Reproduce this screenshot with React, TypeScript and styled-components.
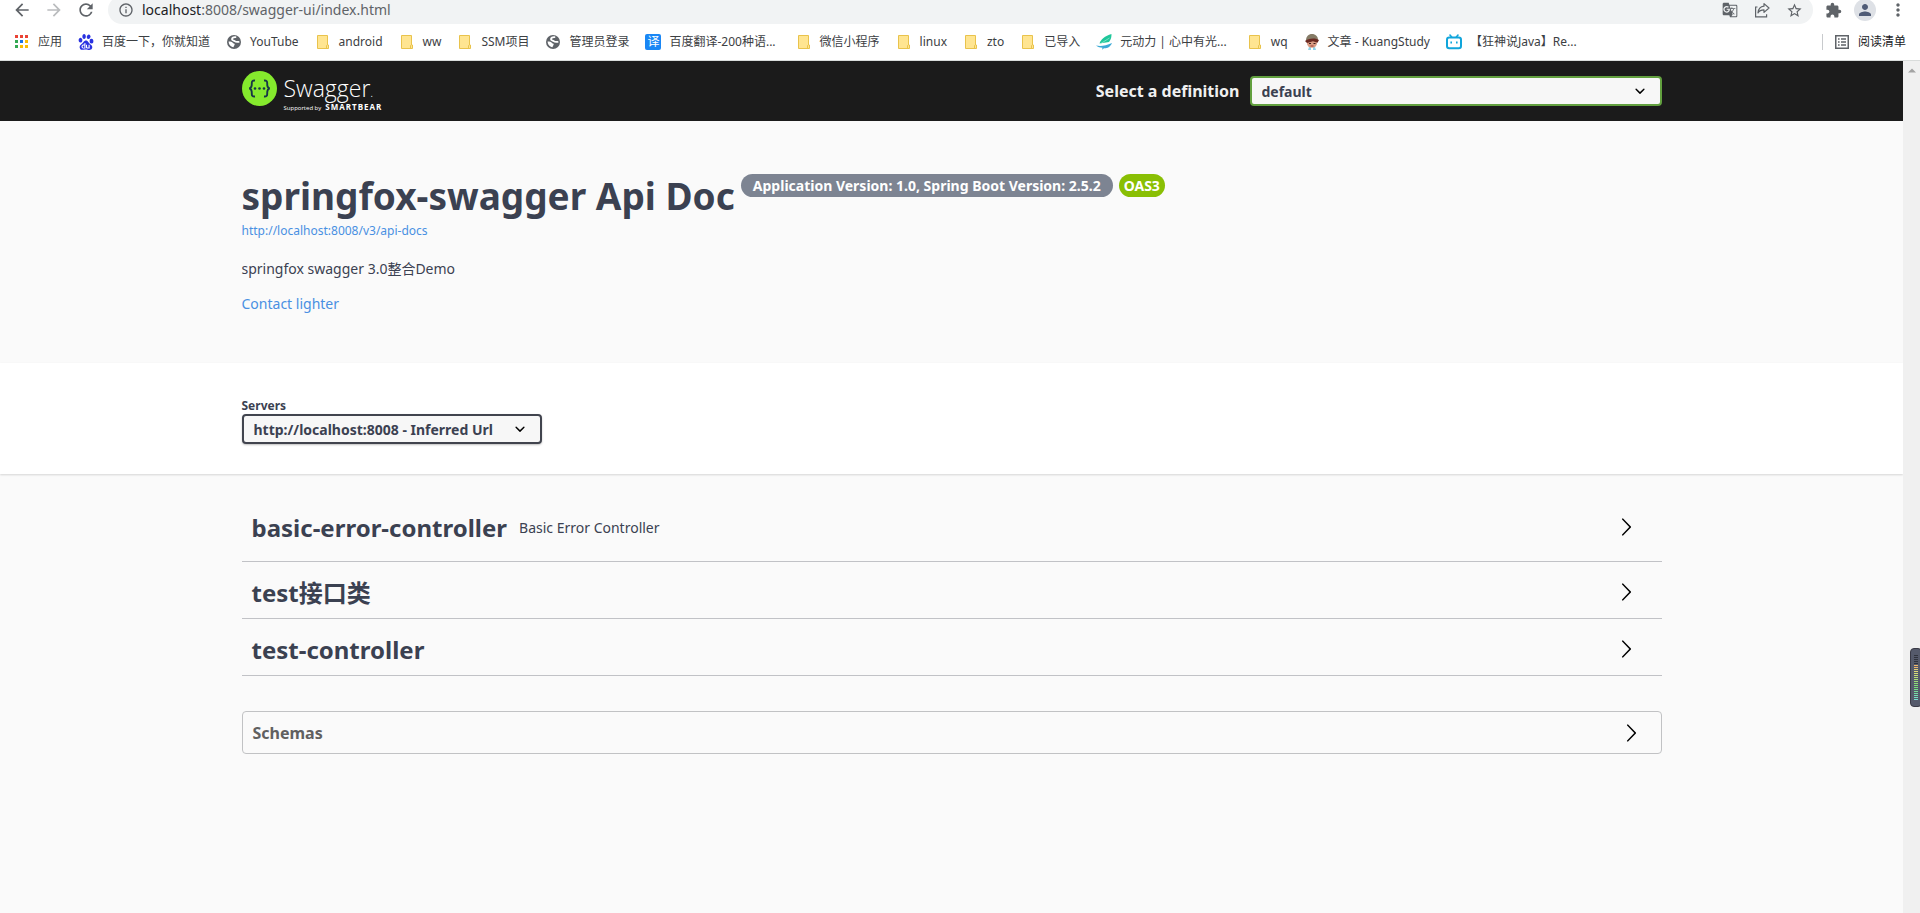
import React from "react";
import styled, { createGlobalStyle } from "styled-components";
import {
  MdArrowBack,
  MdArrowForward,
  MdRefresh,
  MdInfoOutline,
  MdGTranslate,
  MdStarBorder,
  MdExtension,
  MdPerson,
  MdMoreVert,
} from "react-icons/md";
import { SiBaidu } from "react-icons/si";

const GlobalStyle = createGlobalStyle`
  *, *::before, *::after { box-sizing: border-box; }
  body {
    margin: 0;
    background: #fafafa;
    color: #3b4151;
    font-family: "Noto Sans", "Noto Sans CJK SC", sans-serif;
    font-size: 14px;
  }
  button { font-family: inherit; border: 0; padding: 0; background: none; cursor: pointer; }
  h1, h2, p { margin: 0; }
  svg { display: block; }
`;

/* ---------- browser chrome ---------- */

const Shell = styled.div`
  display: flex;
  flex-direction: column;
  min-height: 100vh;
`;

const Chrome = styled.header`
  background: #fff;
  border-bottom: 1px solid #d9dcdb;
  overflow: hidden;
`;

const Toolbar = styled.div`
  display: flex;
  align-items: center;
  height: 28px;
  margin-top: -4px;
  padding: 0 12px;
`;

const NavButtons = styled.nav`
  display: flex;
  gap: 12px;
  margin-right: 12px;
`;

const ToolButton = styled.button<{ $faded?: boolean }>`
  display: flex;
  color: ${(p) => (p.$faded ? "#babcbe" : "#5f6368")};
`;

const AddressBar = styled.div`
  flex: 1;
  display: flex;
  align-items: center;
  height: 28px;
  padding: 0 10px;
  border-radius: 14px;
  background: #f1f3f4;
  color: #5f6368;
`;

const AddressText = styled.div`
  flex: 1;
  margin-left: 8px;
  font-size: 14px;
  line-height: 20px;
  strong { font-weight: 400; color: #202124; }
`;

const AddressActions = styled.div`
  display: flex;
  gap: 16px;
`;

const ToolbarEnd = styled.div`
  display: flex;
  align-items: center;
  gap: 12px;
  margin-left: 12px;
`;

const Avatar = styled.span`
  display: flex;
  align-items: center;
  justify-content: center;
  width: 22px;
  height: 22px;
  border-radius: 50%;
  background: #dee1e6;
  color: #4f5b76;
`;

const BookmarkBar = styled.nav`
  display: flex;
  align-items: center;
  height: 36px;
  padding: 0 14px;
`;

const BookmarkList = styled.div`
  display: flex;
  flex: 1;
  gap: 16px;
`;

const Bookmark = styled.a<{ $cut?: boolean }>`
  display: flex;
  align-items: center;
  gap: 8px;
  padding-right: ${(p) => (p.$cut ? "4px" : "0")};
  color: #3c4043;
  font-size: 12px;
  line-height: 18px;
  white-space: nowrap;
  text-decoration: none;
`;

const TranslateSiteIcon = styled.span`
  width: 16px;
  height: 16px;
  border-radius: 2px;
  background: #1a87f5;
  color: #fff;
  font-size: 12px;
  line-height: 16px;
  text-align: center;
`;

const ReadingList = styled.button`
  display: flex;
  align-items: center;
  gap: 8px;
  height: 16px;
  padding-left: 11px;
  border-left: 1px solid #c8cacd;
  color: #202124;
  font-size: 12px;
  line-height: 18px;
`;

/* ---------- page ---------- */

const Viewport = styled.div`
  flex: 1;
  display: flex;
`;

const Page = styled.main`
  flex: 1;
  min-width: 0;
`;

const ScrollTrack = styled.div`
  display: flex;
  justify-content: center;
  width: 17px;
  padding-top: 7px;
  background: #f0f0f0;
`;

const Wrapper = styled.div`
  max-width: 1460px;
  margin: 0 auto;
  padding: 0 20px;
`;

const Topbar = styled.div`
  background: #1b1b1b;
`;

const TopbarRow = styled(Wrapper)`
  display: flex;
  align-items: center;
  justify-content: space-between;
  height: 60px;
`;

const Logo = styled.a`
  display: flex;
  gap: 7px;
  color: #fff;
  font-family: "Open Sans", sans-serif;
  text-decoration: none;
`;

const LogoName = styled.span`
  display: block;
  margin-top: 2px;
  font-size: 23px;
  font-weight: 300;
  line-height: 30px;
  small { font-size: 12px; line-height: 1; }
`;

const LogoBacker = styled.span`
  display: flex;
  align-items: baseline;
  gap: 4px;
  font-size: 6px;
  line-height: 8px;
  b { font-size: 8px; letter-spacing: 1px; }
`;

const DefinitionLabel = styled.label`
  display: flex;
  align-items: center;
  gap: 10px;
  color: #f0f0f0;
  font-size: 16px;
  font-weight: 700;
`;

const SelectFrame = styled.span<{ $wide?: boolean }>`
  position: relative;
  display: inline-block;
  width: ${(p) => (p.$wide ? "412px" : "300px")};
  svg {
    position: absolute;
    top: 5px;
    right: 12px;
    pointer-events: none;
    fill: #000;
  }
`;

const Select = styled.select<{ $accent?: boolean }>`
  display: block;
  width: 100%;
  height: 30px;
  padding: 0 40px 0 10px;
  appearance: none;
  border: 2px solid ${(p) => (p.$accent ? "#62a03f" : "#41444e")};
  border-radius: 4px;
  background: #f7f7f7;
  box-shadow: ${(p) => (p.$accent ? "none" : "0 1px 2px rgba(0, 0, 0, 0.25)")};
  color: #3b4151;
  font-family: inherit;
  font-size: 14px;
  font-weight: 700;
`;

const Info = styled(Wrapper)`
  padding-top: 50px;
  padding-bottom: 49px;
`;

const Title = styled.h1`
  display: flex;
  align-items: flex-start;
  gap: 6px;
  font-size: 37px;
  line-height: 50px;
`;

const Badge = styled.span<{ $green?: boolean }>`
  margin-top: 3px;
  padding: 0 ${(p) => (p.$green ? "5px" : "12px")};
  border-radius: 12px;
  background: ${(p) => (p.$green ? "#89bf04" : "#7d8492")};
  color: #fff;
  font-size: 14px;
  line-height: 23px;
`;

const TextLink = styled.a<{ $small?: boolean }>`
  display: block;
  width: fit-content;
  color: #4990e2;
  font-size: ${(p) => (p.$small ? "12px" : "14px")};
  line-height: 20px;
  text-decoration: none;
`;

const Description = styled.p`
  margin: 18px 0 15px;
  line-height: 20px;
`;

const Servers = styled.section`
  padding: 34px 0 30px;
  background: #fff;
  box-shadow: 0 1px 2px rgba(0, 0, 0, 0.15);
`;

const ServersLabel = styled.label`
  display: block;
  font-size: 12px;
  font-weight: 700;
  line-height: 17px;
`;

const Tags = styled(Wrapper)`
  padding-top: 20px;
`;

const TagRow = styled.button<{ $tall?: boolean }>`
  display: flex;
  align-items: center;
  width: 100%;
  height: ${(p) => (p.$tall ? "68px" : "57px")};
  padding: ${(p) => (p.$tall ? "0" : "5px")} 26px 0 10px;
  border-bottom: 1px solid #c1c2c6;
  color: #3b4151;
  text-align: left;
  svg { margin-bottom: 2px; }
`;

const TagName = styled.h2`
  font-size: 24px;
  line-height: 36px;
`;

const TagNote = styled.span`
  flex: 1;
  padding: 0 12px;
  font-size: 14px;
`;

const Schemas = styled.button`
  display: flex;
  align-items: center;
  justify-content: space-between;
  width: 100%;
  height: 43px;
  margin: 35px 0;
  padding: 0 20px 0 10px;
  border: 1px solid #c1c2c4;
  border-radius: 4px;
  color: #606060;
  font-size: 16px;
  font-weight: 700;
`;

const MeterWidget = styled.aside`
  position: fixed;
  top: 71%;
  right: -2px;
  width: 12px;
  height: 59px;
  padding: 6px 0 0 3px;
  border: 1px solid #3a3a46;
  border-radius: 4px;
  background: #555a6b;
`;

/* ---------- drawings ---------- */

const AppsIcon = () => (
  <svg width="16" height="16" viewBox="0 0 16 16" aria-hidden>
    {["#ea4335", "#ea4335", "#ea4335", "#34a853", "#1a73e8", "#fbbc04", "#34a853", "#fbbc04", "#fbbc04"].map((c, i) => (
      <rect key={i} x={1 + (i % 3) * 5} y={1 + Math.floor(i / 3) * 5} width="3" height="3" fill={c} />
    ))}
  </svg>
);

const FolderIcon = () => (
  <svg width="16" height="16" viewBox="0 0 16 16" aria-hidden>
    <path d="M2.5 1.500h10v9.500h1v3.500h-11z" fill="#ffe591" stroke="#e9c34c" />
    <path d="M11.500 14v-2.500l1-1" fill="none" stroke="#e9c34c" />
  </svg>
);

const GlobeIcon = () => (
  <svg width="16" height="16" viewBox="0 0 16 16" aria-hidden>
    <circle cx="8" cy="8" r="7" fill="#5f6368" />
    <path
      d="M9.500 3.200C7.500 3 6 3.900 6 5.200c0 1.500 2.200 1.200 3 2.100.7.900 1.900.6 3.600.6"
      fill="none"
      stroke="#fff"
      strokeWidth="1.800"
      strokeLinecap="round"
    />
    <path d="M2.600 7.600c2 0 3.600.2 4.400 1.300.5.700 2 .4 1.700 1.700L7.400 13.200C4.700 12.900 2.600 10.600 2.600 7.600z" fill="#fff" />
  </svg>
);

const WingIcon = () => (
  <svg width="16" height="16" viewBox="0 0 16 16" aria-hidden>
    <path d="M15.500 0C9 2 4.500 5.500 3.500 9.600L13 8c2-2.500 2.500-5 2.500-8z" fill="#1fc79b" />
    <path d="M4 10 13.500 4" stroke="#b9f0de" strokeWidth="0.6" />
    <path d="M0 11.500c5 1.200 10 0 16-2.500-2 4.500-5 5.500-8 5.300l-2 1.500.5-2C4 13.600 2 13 0 11.500z" fill="#3ba9d6" />
  </svg>
);

const KuangIcon = () => (
  <svg width="16" height="16" viewBox="0 0 16 16" aria-hidden>
    <path d="M5 13h6l1 3H4z" fill="#8fd3ea" />
    <path d="M7 13h2v3H7z" fill="#fff" />
    <ellipse cx="8" cy="9.500" rx="5" ry="4.200" fill="#d99b83" />
    <path d="M2 6.500C2 2.500 4.500 0 8 0s6 2.500 6 6z" fill="#857b66" />
    <path d="M1 7c3-3 11-3.500 14-1l-1.500 2.800L9 7.200 3 9z" fill="#6b2a22" />
    <path d="M5 9.500h2M9.500 9.500h2" stroke="#3c1f1c" />
    <path d="M6.500 12h3" stroke="#9c3f36" />
  </svg>
);

const TvIcon = () => (
  <svg width="16" height="16" viewBox="0 0 16 16" aria-hidden>
    <path d="M4 1l2 2.500M12 1l-2 2.500" stroke="#10a5db" strokeWidth="1.600" strokeLinecap="round" />
    <rect x="1" y="3.600" width="14" height="10.600" rx="2.200" fill="#fff" stroke="#10a5db" strokeWidth="2" />
    <path d="M5.200 7.500v2M10.800 7.500v2" stroke="#10a5db" strokeWidth="1.600" />
  </svg>
);

const ReadingListIcon = () => (
  <svg width="16" height="16" viewBox="0 0 16 16" fill="none" stroke="#5f6368" aria-hidden>
    <rect x="1.750" y="1.750" width="12.500" height="12.500" strokeWidth="1.500" />
    <path d="M4 5h1.600M4 8h1.600M4 11h1.600M7 5h5M7 8h5M7 11h5" strokeWidth="1.500" />
  </svg>
);

const ShareIcon = () => (
  <svg width="16" height="16" viewBox="0 0 16 16" fill="none" stroke="#5f6368" strokeWidth="1.200" aria-hidden>
    <path d="M3.500 5H1.600v9.900h11v-2.600" />
    <path d="M10 1.600 15 6l-5 4.400V7.900c-3 0-4.800 1-6 3C4.300 7.300 6.500 4.600 10 4.200z" strokeLinejoin="round" />
  </svg>
);

const ScrollUpIcon = () => (
  <svg width="8" height="5" viewBox="0 0 8 5" aria-hidden>
    <path d="M0 4.500 4 0.500l4 4z" fill="#a3a3a3" />
  </svg>
);

const SwaggerMark = () => (
  <svg width="35" height="35" viewBox="0 0 35 35" aria-hidden>
    <circle cx="17.500" cy="17.500" r="17.500" fill="#85ea2d" />
    <g fill="none" stroke="#173647" strokeWidth="1.900">
      <path d="M13 9.500c-2.600-.2-3.300.8-3.200 2.800.1 2.500.2 4.800-2.600 5.200 2.800.4 2.700 2.700 2.600 5.200-.1 2 .6 3 3.200 2.800" />
      <path d="M22 9.500c2.600-.2 3.300.8 3.200 2.800-.1 2.500-.2 4.800 2.600 5.200-2.800.4-2.700 2.700-2.600 5.200.1 2-.6 3-3.200 2.800" />
    </g>
    <g fill="#173647">
      <circle cx="13" cy="17.500" r="1.300" />
      <circle cx="17.500" cy="17.500" r="1.300" />
      <circle cx="22" cy="17.500" r="1.300" />
    </g>
  </svg>
);

const DownArrow = () => (
  <svg width="20" height="20" viewBox="0 0 20 20" aria-hidden>
    <path d="M13.418 7.859a.695.695 0 0 1 .978 0 .68.680 0 0 1 0 .969l-3.908 3.830a.697.697 0 0 1-.979 0l-3.908-3.830a.68.680 0 0 1 0-.969.695.695 0 0 1 .978 0L10 11l3.418-3.141z" />
  </svg>
);

const RightArrow = () => (
  <svg width="20" height="20" viewBox="0 0 20 20" aria-hidden>
    <path d="M13.250 10L6.109 2.580c-.268-.27-.268-.707 0-.979.268-.27.701-.27.969 0l7.830 7.908c.268.271.268.709 0 .979l-7.830 7.908c-.268.271-.701.270-.969 0-.268-.269-.268-.707 0-.979L13.250 10z" />
  </svg>
);

const MeterBars = () => (
  <svg width="4" height="46" viewBox="0 0 4 46" aria-hidden>
    {Array.from({ length: 23 }, (_, i) => (
      <rect
        key={i}
        y={i * 2}
        width="4"
        height="1"
        fill={i < 5 ? "#30333d" : i < 7 ? "#f0b76a" : `hsl(${50 + (i - 7) * 8}, 62%, 67%)`}
      />
    ))}
  </svg>
);

/* ---------- data ---------- */

const bookmarks: { label: string; icon: React.ReactNode }[] = [
  { label: "应用", icon: <AppsIcon /> },
  { label: "百度一下，你就知道", icon: <SiBaidu size={16} color="#2932e1" /> },
  { label: "YouTube", icon: <GlobeIcon /> },
  { label: "android", icon: <FolderIcon /> },
  { label: "ww", icon: <FolderIcon /> },
  { label: "SSM项目", icon: <FolderIcon /> },
  { label: "管理员登录", icon: <GlobeIcon /> },
  { label: "百度翻译-200种语...", icon: <TranslateSiteIcon>译</TranslateSiteIcon> },
  { label: "微信小程序", icon: <FolderIcon /> },
  { label: "linux", icon: <FolderIcon /> },
  { label: "zto", icon: <FolderIcon /> },
  { label: "已导入", icon: <FolderIcon /> },
  { label: "元动力 | 心中有光...", icon: <WingIcon /> },
  { label: "wq", icon: <FolderIcon /> },
  { label: "文章 - KuangStudy", icon: <KuangIcon /> },
  { label: "【狂神说Java】Re...", icon: <TvIcon /> },
];

const tags = [
  { name: "basic-error-controller", note: "Basic Error Controller" },
  { name: "test接口类", note: "" },
  { name: "test-controller", note: "" },
];

export default function App() {
  return (
    <Shell>
      <GlobalStyle />
      <Chrome>
        <Toolbar>
          <NavButtons>
            <ToolButton aria-label="Back"><MdArrowBack size={20} /></ToolButton>
            <ToolButton aria-label="Forward" $faded><MdArrowForward size={20} /></ToolButton>
            <ToolButton aria-label="Reload"><MdRefresh size={20} /></ToolButton>
          </NavButtons>
          <AddressBar>
            <MdInfoOutline size={16} />
            <AddressText>
              <strong>localhost</strong>:8008/swagger-ui/index.html
            </AddressText>
            <AddressActions>
              <ToolButton aria-label="Translate"><MdGTranslate size={16} /></ToolButton>
              <ToolButton aria-label="Share"><ShareIcon /></ToolButton>
              <ToolButton aria-label="Bookmark"><MdStarBorder size={17} /></ToolButton>
            </AddressActions>
          </AddressBar>
          <ToolbarEnd>
            <ToolButton aria-label="Extensions"><MdExtension size={17} /></ToolButton>
            <Avatar><MdPerson size={18} /></Avatar>
            <ToolButton aria-label="Menu"><MdMoreVert size={20} /></ToolButton>
          </ToolbarEnd>
        </Toolbar>
        <BookmarkBar>
          <BookmarkList>
            {bookmarks.map((b) => (
              <Bookmark key={b.label} href="#" $cut={b.label.endsWith("...")}>
                {b.icon}
                {b.label}
              </Bookmark>
            ))}
          </BookmarkList>
          <ReadingList>
            <ReadingListIcon />
            阅读清单
          </ReadingList>
        </BookmarkBar>
      </Chrome>

      <Viewport>
        <Page>
          <Topbar>
            <TopbarRow>
              <Logo href="#">
                <SwaggerMark />
                <span>
                  <LogoName>Swagger<small>.</small></LogoName>
                  <LogoBacker>Supported by <b>SMARTBEAR</b></LogoBacker>
                </span>
              </Logo>
              <DefinitionLabel>
                Select a definition
                <SelectFrame $wide>
                  <Select $accent>
                    <option>default</option>
                  </Select>
                  <DownArrow />
                </SelectFrame>
              </DefinitionLabel>
            </TopbarRow>
          </Topbar>

          <Info>
            <Title>
              springfox-swagger Api Doc
              <Badge>Application Version: 1.0, Spring Boot Version: 2.5.2</Badge>
              <Badge $green>OAS3</Badge>
            </Title>
            <TextLink $small href="#">http://localhost:8008/v3/api-docs</TextLink>
            <Description>springfox swagger 3.0整合Demo</Description>
            <TextLink href="#">Contact lighter</TextLink>
          </Info>

          <Servers>
            <Wrapper>
              <ServersLabel htmlFor="servers">Servers</ServersLabel>
              <SelectFrame>
                <Select id="servers">
                  <option>http://localhost:8008 - Inferred Url</option>
                </Select>
                <DownArrow />
              </SelectFrame>
            </Wrapper>
          </Servers>

          <Tags>
            {tags.map((t) => (
              <TagRow key={t.name} $tall={t.note !== ""}>
                <TagName>{t.name}</TagName>
                <TagNote>{t.note}</TagNote>
                <RightArrow />
              </TagRow>
            ))}
            <Schemas>
              Schemas
              <RightArrow />
            </Schemas>
          </Tags>
        </Page>
        <ScrollTrack>
          <ScrollUpIcon />
        </ScrollTrack>
      </Viewport>
      <MeterWidget>
        <MeterBars />
      </MeterWidget>
    </Shell>
  );
}
